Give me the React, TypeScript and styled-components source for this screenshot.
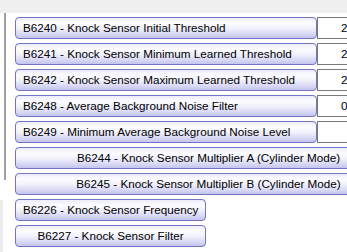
import React from "react";
import styled, { createGlobalStyle } from "styled-components";

const Global = createGlobalStyle`
  html, body { margin: 0; padding: 0; overflow: hidden; background: #ffffff; }
  body { font-family: "Liberation Sans", Arial, sans-serif; }
`;

const Page = styled.div`
  width: 347px;
  height: 252px;
  display: flex;
  flex-direction: column;
  overflow: hidden;
`;

const TopBand = styled.div`
  height: 13px;
  flex: none;
  background: #f0f0f0;
`;

const Body = styled.div`
  flex: 1;
  display: flex;
`;

const Rail = styled.div`
  width: 15px;
  flex: none;
  display: flex;
  flex-direction: column;
`;

const RailLine = styled.div`
  margin-left: 4px;
  width: 2px;
  height: 167px;
  background: #a0a0a0;
`;

const RailStripe = styled.div`
  margin-top: 20px;
  width: 3px;
  flex: 1;
  background: #ececec;
`;

const List = styled.div`
  flex: 1;
  display: flex;
  flex-direction: column;
  gap: 4px;
  padding-top: 4px;
`;

const Row = styled.div`
  display: flex;
  height: 22px;
`;

const Button = styled.button<{ $w: number; $align: "left" | "center" }>`
  box-sizing: border-box;
  flex: none;
  width: ${(p) => p.$w}px;
  height: 22px;
  margin: 0;
  padding: 0 7px;
  border: 1px solid #7474c4;
  border-radius: 4px;
  background: linear-gradient(to bottom, #ececfb 0%, #fcfcff 25%, #f2f2fc 50%, #d8d8f5 80%, #c4c4ee 100%);
  font-family: "Liberation Sans", Arial, sans-serif;
  font-size: 11.7px;
  line-height: 20px;
  color: #000;
  text-align: ${(p) => p.$align};
  white-space: nowrap;
  overflow: hidden;
`;

const ValueBox = styled.div`
  box-sizing: border-box;
  flex: none;
  width: 60px;
  height: 22px;
  border: 1px solid #7a7a7a;
  background: #fff;
  padding-left: 23px;
  font-family: "Liberation Sans", Arial, sans-serif;
  font-size: 11.7px;
  line-height: 20px;
  color: #000;
`;

type Item = { label: string; w: number; align: "left" | "center"; value?: string };

const items: Item[] = [
  { label: "B6240 - Knock Sensor Initial Threshold", w: 302, align: "left", value: "2" },
  { label: "B6241 - Knock Sensor Minimum Learned Threshold", w: 302, align: "left", value: "2" },
  { label: "B6242 - Knock Sensor Maximum Learned Threshold", w: 302, align: "left", value: "2" },
  { label: "B6248 - Average Background Noise Filter", w: 302, align: "left", value: "0" },
  { label: "B6249 - Minimum Average Background Noise Level", w: 302, align: "left", value: "" },
  { label: "B6244 - Knock Sensor Multiplier A (Cylinder Mode)", w: 387, align: "center" },
  { label: "B6245 - Knock Sensor Multiplier B (Cylinder Mode)", w: 387, align: "center" },
  { label: "B6226 - Knock Sensor Frequency", w: 191, align: "center" },
  { label: "B6227 - Knock Sensor Filter", w: 191, align: "center" },
];

export default function App() {
  return (
    <Page>
      <Global />
      <TopBand />
      <Body>
        <Rail>
          <RailLine />
          <RailStripe />
        </Rail>
        <List>
          {items.map((it) => (
            <Row key={it.label}>
              <Button $w={it.w} $align={it.align}>{it.label}</Button>
              {it.value !== undefined && <ValueBox>{it.value}</ValueBox>}
            </Row>
          ))}
        </List>
      </Body>
    </Page>
  );
}
